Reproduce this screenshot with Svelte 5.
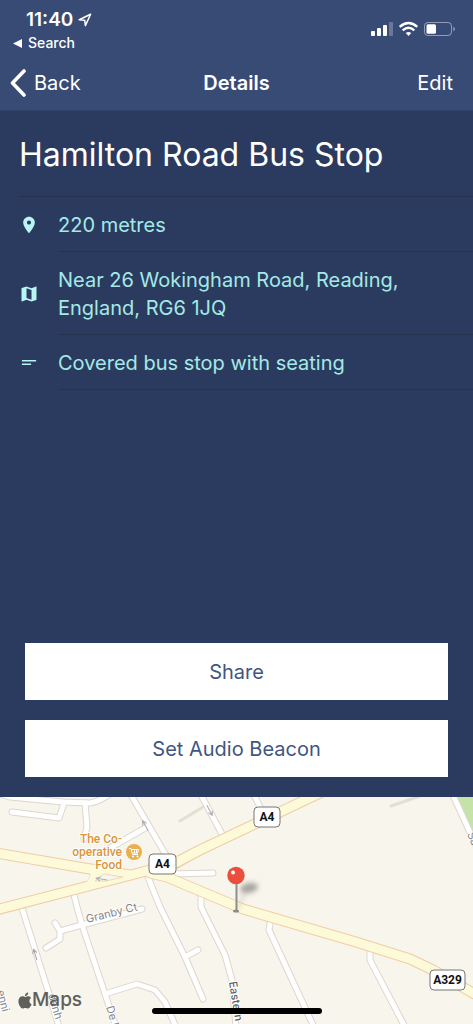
<script>
  const details = [
    { icon: 'place', text: '220 metres' },
    { icon: 'map', text: 'Near 26 Wokingham Road, Reading, England, RG6 1JQ' },
    { icon: 'notes', text: 'Covered bus stop with seating' }
  ];

  const ICONS = {
    place: 'M12 2C8.13 2 5 5.13 5 9c0 5.25 7 13 7 13s7-7.75 7-13c0-3.87-3.13-7-7-7zm0 9.5c-1.38 0-2.5-1.12-2.5-2.5s1.12-2.5 2.5-2.5 2.5 1.12 2.5 2.5-1.12 2.5-2.5 2.5z',
    map: 'M20.5 3l-.16.03L15 5.1 9 3 3.36 4.9c-.21.07-.36.25-.36.48V20.5c0 .28.22.5.5.5l.16-.03L9 18.9l6 2.1 5.64-1.9c.21-.07.36-.25.36-.48V3.5c0-.28-.22-.5-.5-.5zM15 19l-6-2.11V5l6 2.11V19z',
    notes: 'M3.5 8.5h17v1.8h-17zM3.5 12.7h11v1.8h-11z'
  };

  const streets = [
    'M0 -3L10 0L63 5L90 6Q98 5 110 -3',
    'M12 15L59 21L64 6',
    'M85 6L87 30L84 42',
    'M131 -2L167 60',
    'M147 30L110 51',
    'M200 -4L223 39',
    'M170 77L213 76',
    'M148 80L160 110L185 160L203 202',
    'M185 160L198 153',
    'M73 94L77 110L82 128L105 197L116 230',
    'M21 108L50 200L59 230',
    'M142 112L82 128L60 134L55 126',
    'M60 134L60 142L46 151',
    'M105 197L137 187L155 193L165 205L176 230',
    'M201 94L201 110L225 158L232 183L236 230',
    'M271 120L269 133L314 230',
    'M370 148L370 163L405 230',
    'M253 -4L262 14',
    'M452 -4L478 53'
  ];

  const mainRoads = [
    'M-4 56L84 71L130 78',
    'M-4 113L73 93L123 80L150 73L177 65L200 53L240 34L320 -4',
    'M150 76L167 80L200 94L243 112L356 145L410 162L433 173L478 199'
  ];

  const arrows = [
    { x: 145, y: 28, angle: -118 },
    { x: 210, y: 14, angle: 62 },
    { x: 101, y: 82, angle: 190 },
    { x: 35, y: 157, angle: -107 }
  ];

  const shields = [
    { label: 'A4', x: 254, y: 10, width: 26 },
    { label: 'A4', x: 149, y: 57, width: 27 },
    { label: 'A329', x: 430, y: 173, width: 35 }
  ];
</script>

<div class="screen">
  <header>
    <div class="status">
      <div class="status-left">
        <div class="time">
          <span>11:40</span>
          <svg width="14" height="14" viewBox="0 0 14 14" aria-hidden="true">
            <path d="M1.2 6.7L12.6 1.2L7.4 12.6L6.7 7.2Z" fill="none" stroke="#fff" stroke-width="1.5" stroke-linejoin="round" />
          </svg>
        </div>
        <a class="return" href="#search">
          <svg width="10" height="9" viewBox="0 0 10 9" aria-hidden="true"><path d="M0 4.5L9 0V9Z" fill="#fff" /></svg>
          Search
        </a>
      </div>
      <svg class="status-right" width="86" height="16" viewBox="0 0 86 16" aria-hidden="true">
        <g fill="#fff">
          <rect x="1" y="10" width="4" height="5" rx="1" />
          <rect x="7" y="7" width="4" height="8" rx="1" />
          <rect x="13" y="4" width="4" height="11" rx="1" />
          <rect x="19" y="1" width="4" height="14" rx="1" opacity="0.25" />
          <path d="M38.5 15L35.7 12.1Q38.5 10 41.3 12.1Z" />
        </g>
        <g fill="none" stroke="#fff" stroke-width="2.4">
          <path d="M29.7 5.8Q38.5 -1.9 47.3 5.8" />
          <path d="M32.7 9.4Q38.5 4.3 44.3 9.4" />
        </g>
        <rect x="54.5" y="1.5" width="27" height="13" rx="3.5" fill="none" stroke="#fff" stroke-opacity="0.45" />
        <rect x="56.5" y="3.3" width="9.5" height="9.5" rx="1.5" fill="#fff" />
        <path d="M83.3 5.8q1.7 .5 1.7 2.2t-1.7 2.2z" fill="#fff" opacity="0.45" />
      </svg>
    </div>
    <nav>
      <button class="back">
        <svg width="16" height="28" viewBox="0 0 16 28" aria-hidden="true">
          <path d="M14 2L2.5 14L14 26" fill="none" stroke="#fff" stroke-width="3.6" stroke-linecap="round" stroke-linejoin="round" />
        </svg>
        Back
      </button>
      <h2>Details</h2>
      <button class="edit">Edit</button>
    </nav>
  </header>

  <main>
    <h1>Hamilton Road Bus Stop</h1>
    <ul>
      {#each details as detail}
        <li>
          <svg class="icon" viewBox="0 0 24 24" aria-hidden="true"><path d={ICONS[detail.icon]} /></svg>
          <p>{detail.text}</p>
        </li>
      {/each}
    </ul>
    <div class="actions">
      <button>Share</button>
      <button>Set Audio Beacon</button>
    </div>
  </main>

  <div class="map">
    <svg class="tiles" viewBox="0 0 473 227" role="img" aria-label="Map">
      <defs>
        <filter id="soft" x="-50%" y="-100%" width="200%" height="300%"><feGaussianBlur stdDeviation="2.5" /></filter>
      </defs>
      <rect width="473" height="227" fill="#f8f5ed" />
      <path d="M457 -1L474 37V-1Z" fill="#c5e2a9" />
      <path class="footpath" d="M180 24L203 10M391 9L420 -1" />

      {#each streets as d}<path class="street-edge" {d} />{/each}
      {#each streets as d}<path class="street" {d} />{/each}

      {#each mainRoads as d}<path class="main-edge" {d} />{/each}
      <path d="M84 71Q93 76 89 82L80 92L97 87L105 75Z" fill="#fcfad9" stroke="#f0cfa5" />
      <path d="M165 68L200 54L196 60L177 71Z" fill="#fcfad9" stroke="#f0cfa5" stroke-width="2" />
      {#each mainRoads as d}<path class="main" {d} />{/each}
      <path d="M82 92L90 80L91 76L103 77L97 88Z" fill="#fcfad9" />
      <path d="M95 84L104 77L123 80L106 84Z" fill="#f8f5ed" stroke="#f0d9b8" />

      {#each arrows as arrow}
        <path class="arrow" d="M-6 0H5M1 -2L5 0L1 2" transform="translate({arrow.x} {arrow.y}) rotate({arrow.angle})" />
      {/each}

      <g class="street-name">
        <text transform="translate(87 126) rotate(-14)">Granby Ct</text>
        <text transform="translate(-3 194) rotate(76)">enni</text>
        <text transform="translate(48 198) rotate(73)">denh</text>
        <text transform="translate(106 210) rotate(74)">De B</text>
        <text class="dark" transform="translate(229 185) rotate(81)">Eastern</text>
        <text transform="translate(467 37) rotate(68)">Sa</text>
      </g>

      <g class="poi">
        <text x="122" y="46">The Co-</text>
        <text x="122" y="59">operative</text>
        <text x="122" y="72">Food</text>
      </g>
      <circle cx="134" cy="55" r="8" fill="#e9b04d" />
      <path d="M129 51.5h2l1.5 6h5.5M131.5 52.5h7l-1 3.5h-5M134.5 52.5v3.5M136.5 52.5v3.5" fill="none" stroke="#fff" />
      <circle cx="133" cy="59.5" r="1" fill="#fff" />
      <circle cx="137.5" cy="59.5" r="1" fill="#fff" />

      {#each shields as shield}
        <rect class="shield" x={shield.x} y={shield.y} width={shield.width} height="20" rx="4" />
        <text class="shield-text" x={shield.x + shield.width / 2} y={shield.y + 14}>{shield.label}</text>
      {/each}

      <ellipse cx="249" cy="91" rx="9" ry="5" transform="rotate(-12 249 91)" fill="#555" opacity="0.5" filter="url(#soft)" />
      <path d="M237 112L245 96" stroke="#777" stroke-width="3" opacity="0.25" filter="url(#soft)" />
      <ellipse cx="236" cy="114" rx="3" ry="1.5" fill="#8a8a80" />
      <path d="M236.5 84V115" stroke="#8e8e8e" stroke-width="2" />
      <circle cx="236" cy="78.5" r="8.7" fill="#eb4e3d" />
      <circle cx="233" cy="75.5" r="2" fill="#fff" />
    </svg>

    <div class="credit">
      <svg width="14" height="17" viewBox="3.5 1.5 17 21" aria-hidden="true">
        <path d="M18.71 19.5c-.83 1.24-1.71 2.45-3.05 2.47-1.34.03-1.77-.79-3.29-.79-1.53 0-2 .77-3.27.82-1.31.05-2.3-1.32-3.14-2.53C4.25 17 2.94 12.45 4.7 9.39c.87-1.52 2.43-2.48 4.12-2.51 1.28-.02 2.5.87 3.29.87.78 0 2.26-1.07 3.81-.91.65.03 2.47.26 3.64 1.98-.09.06-2.17 1.28-2.15 3.81.03 3.02 2.65 4.03 2.68 4.04-.03.07-.42 1.44-1.38 2.83M13 3.5c.73-.83 1.94-1.46 2.94-1.5.13 1.17-.34 2.35-1.04 3.19-.69.85-1.83 1.51-2.95 1.42-.15-1.15.41-2.35 1.05-3.11z" />
      </svg>
      <span>Maps</span>
    </div>
    <div class="home-indicator"></div>
  </div>
</div>

<style>
  :global(body) {
    background: #2b3b5f;
  }

  .screen {
    display: flex;
    flex-direction: column;
    min-height: 100vh;
    color: #fff;
    background: #2b3b5f;
    font-family: Inter, Roboto, "Liberation Sans", sans-serif;
  }

  button {
    border: none;
    padding: 0;
    background: none;
    color: inherit;
    font: inherit;
    cursor: pointer;
  }

  header {
    background: #384b75;
    border-bottom: 1px solid #304268;
  }

  .status {
    display: flex;
    justify-content: space-between;
    padding: 8px 17px 0 13px;
  }

  .time {
    display: flex;
    align-items: center;
    gap: 5px;
    padding-left: 13px;
    font-size: 19px;
    line-height: 24px;
    font-weight: 600;
  }

  .return {
    display: flex;
    align-items: center;
    gap: 5px;
    color: #fff;
    font-size: 14px;
    line-height: 22px;
    font-weight: 500;
    text-decoration: none;
  }

  .status-right {
    margin-top: 13px;
  }

  nav {
    display: grid;
    grid-template-columns: 1fr auto 1fr;
    align-items: center;
    padding: 15px 10px 13px;
    font-size: 20px;
    line-height: 28px;
  }

  .back {
    display: flex;
    align-items: center;
    gap: 8px;
    justify-self: start;
  }

  .edit {
    justify-self: end;
    padding-right: 10px;
  }

  h2 {
    margin: 0;
    font-size: 20px;
    font-weight: 600;
  }

  main {
    display: flex;
    flex: 1;
    flex-direction: column;
  }

  h1 {
    margin: 0 0 0 19px;
    padding: 23px 0 20px;
    border-bottom: 1px solid #26334f;
    font-size: 32px;
    line-height: 42px;
    font-weight: 400;
  }

  ul {
    margin: 0;
    padding: 0;
    list-style: none;
  }

  li {
    display: flex;
    align-items: center;
    gap: 19px;
    padding-left: 19px;
    color: #a3eae6;
    font-size: 20px;
    line-height: 28px;
  }

  .icon {
    flex: none;
    width: 20px;
    height: 20px;
    fill: #b8f5f3;
  }

  li p {
    flex: 1;
    margin: 0;
    padding: 14px 40px 12px 0;
    border-bottom: 1px solid #26334f;
  }

  .actions {
    display: flex;
    flex-direction: column;
    gap: 20px;
    margin-top: auto;
    padding: 20px 25px;
  }

  .actions button {
    height: 57px;
    color: #3f5682;
    background: #fff;
    font-size: 20px;
  }

  .map {
    position: relative;
    overflow: hidden;
  }

  .tiles {
    display: block;
    width: 100%;
  }

  .footpath,
  .street-edge,
  .street,
  .main-edge,
  .main,
  .arrow {
    fill: none;
    stroke-linecap: round;
    stroke-linejoin: round;
  }

  .footpath {
    stroke: #e3dfd2;
    stroke-width: 3;
  }

  .street-edge {
    stroke: #dcd7ce;
    stroke-width: 7;
  }

  .street {
    stroke: #fff;
    stroke-width: 5;
  }

  .main-edge {
    stroke: #f0cda4;
    stroke-width: 11;
  }

  .main {
    stroke: #fcfad9;
    stroke-width: 9;
  }

  .arrow {
    stroke: #a9a9ab;
    stroke-width: 1;
  }

  .street-name {
    fill: #85858a;
    stroke: #fff;
    stroke-width: 2;
    paint-order: stroke;
    font-size: 11px;
  }

  .dark {
    fill: #5c5c60;
    font-weight: 500;
  }

  .poi {
    fill: #d9963c;
    stroke: #fff;
    stroke-width: 2;
    paint-order: stroke;
    font-family: Roboto, "Liberation Sans", sans-serif;
    font-size: 12px;
    font-weight: 500;
    text-anchor: end;
  }

  .shield {
    fill: #fff;
    stroke: #77777a;
  }

  .shield-text {
    fill: #111;
    font-family: Roboto, "Liberation Sans", sans-serif;
    font-size: 12px;
    font-weight: 700;
    text-anchor: middle;
  }

  .credit {
    position: absolute;
    bottom: 12px;
    left: 18px;
    display: flex;
    align-items: center;
    color: #5f5f5c;
    fill: #5f5f5c;
    font-size: 19px;
    line-height: 24px;
    font-weight: 500;
  }

  .home-indicator {
    position: absolute;
    bottom: 10px;
    left: 50%;
    width: 170px;
    height: 6px;
    border-radius: 3px;
    background: #000;
    transform: translateX(-50%);
  }
</style>
